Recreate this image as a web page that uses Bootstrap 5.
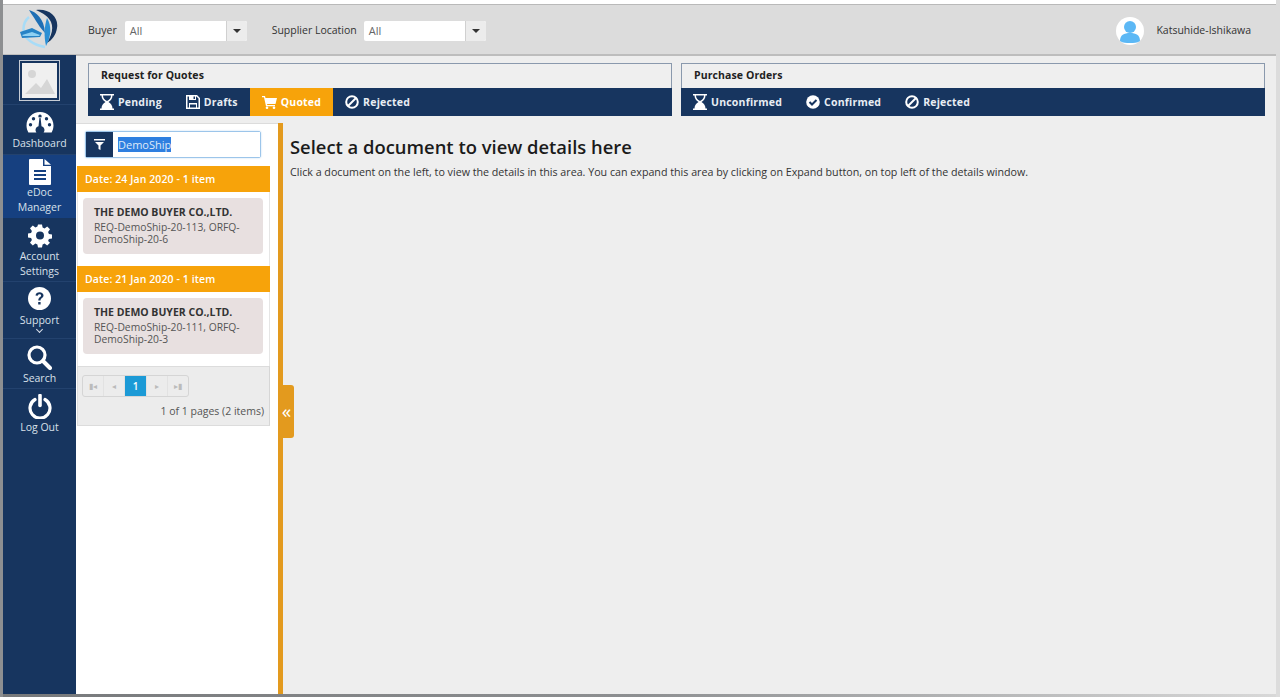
<!doctype html>
<html lang="en">
<head>
<meta charset="utf-8">
<title>eDoc Manager</title>
<link href="https://cdn.jsdelivr.net/npm/bootstrap@5.3.0/dist/css/bootstrap.min.css" rel="stylesheet">
<style>
html,body{height:100%;overflow:hidden}
body{font-family:"Open Sans","Noto Sans",sans-serif;font-size:11px;color:#333;background:#fff}
.frame{height:697px;background:#fff;display:flex;flex-direction:column;border-left:3px solid #8d8f91;padding-top:4px;border-right:4px solid #dcdcdc}
.bottom-edge{height:3px;flex:none;background:linear-gradient(90deg,#77797b,#8d8f91 50%,#d8d8d8)}
.topbar{height:52px;flex:none;background:#dcdcdc;border-top:1px solid #b9b9b9;border-bottom:2px solid #bdbdbd;padding:2px 24px 0 16px}
.brand{width:42px;height:42px;margin:-2px 27px 0 0}
.fl-label{font-size:10.5px;color:#333;margin-right:8px;padding-top:1px}
.fl-label.second{margin-left:1px;margin-right:7px}
.dd{width:122px;height:20px;background:#fff;border-radius:2px;margin-right:24px;overflow:hidden}
.dd-val{flex:1;padding-left:5px;font-size:11px;color:#666;line-height:20px}
.dd-btn{width:21px;background:#ececec;border-left:1px solid #d0d0d0}
.dd-btn i{display:block;border-top:4px solid #333;border-left:4px solid transparent;border-right:4px solid transparent}
.ava{width:28px;height:28px;border-radius:50%;background:#fff;margin-right:12px}
.uname{font-size:10.5px;color:#333;margin-right:1px}
.body-row{flex:1;min-height:0;display:flex;background:#eee}
.side{width:73px;flex:none;background:#17355f;color:#d9e0ea;margin-top:-1px;position:relative}
.side-item{display:flex;flex-direction:column;align-items:center;border-bottom:1px solid #23426e;text-align:center;line-height:14.5px;font-size:10.5px;padding-top:6px}
.side-item svg{display:block;margin-bottom:1px}
.si-photo{height:50px;padding-top:5px}
.si-dash{height:50px}.si-edoc{height:63px;background:#164080;border:none;padding-top:4px}.si-edoc svg{margin-bottom:0}.si-acct{height:64px}.si-supp{height:57px;padding-top:5px}.si-supp span{margin-top:2px}.si-srch{height:50px}.si-out{height:49px;border:none;padding-top:5px}
.photo{width:41px;height:41px;border:1px solid #c6ccd5;padding:2px;background:#17355f}
.photo div{width:100%;height:100%;background:#f0f0f0;display:flex}
.chev{display:block;width:5px;height:5px;border-right:1px solid #d9e0ea;border-bottom:1px solid #d9e0ea;transform:rotate(45deg);margin-top:-1px}
.mainwrap{flex:1;min-width:0;display:flex;flex-direction:column}
.tabs-row{height:67px;flex:none;padding:7px 11px 0 12px;gap:9px;display:flex}
.tpanel{flex:1 1 0;height:53px;border:1px solid #8a99ad;border-bottom:0;background:#efefef}
.tpanel-title{height:24px;padding-left:12px;line-height:22px;font-weight:700;font-size:10.5px;color:#222;letter-spacing:.1px}
.tpanel-tabs{height:28px;background:#17355f;margin-left:-1px;margin-right:-1px}
.tabx{display:flex;align-items:center;color:#e8edf3;font-weight:700;font-size:10.5px;height:28px;letter-spacing:.2px;padding:2px 12px 0;gap:4px;text-decoration:none}
.tabx svg{margin-top:-2px}
.tabx.on{background:#f7a30a;color:#fff}
.work{flex:1;min-height:0;display:flex}
.listpane{width:202px;flex:none;background:#fff;padding-top:7px;padding-left:1px;border-top:1px solid #dcdcdc}
.searchbx{width:176px;height:27px;margin-left:8px;display:flex;border:1px solid #9cc5ea;border-radius:2px;margin-bottom:8px;box-shadow:0 0 2px #bcd9f2}
.funnel{width:27px;background:#17355f;display:flex;align-items:center;justify-content:center}
.searchval{flex:1;padding:0 5px;line-height:25px;font-size:11px;color:#333;background:#fff}
.sel{background:#2f7fe0;color:#dfeaf8}
.grp{width:193px}
.dhead{height:26px;background:#f7a30a;color:#fff;font-weight:600;font-size:10.5px;line-height:27px;padding-left:8px;letter-spacing:.1px}
.dbody{height:74px;padding:6px 6px 6px 5px;border-left:1px solid #e6e6e6;border-right:1px solid #e6e6e6}
.dcard{height:56px;background:#e8e0e0;border-radius:4px;padding:7px 8px 0 11px;font-size:10.3px;line-height:11.5px;color:#555}
.dcard b{display:block;font-weight:700;color:#333;font-size:10.5px;line-height:14px;margin-bottom:3px}
.pagerbar{height:60px;background:#ececec;border:1px solid #dcdcdc;border-right-color:#d6d6d6;padding:8px 5px 0 4px}
.pg{width:107px;height:22px;border:1px solid #d5d5d5;border-radius:3px;display:flex;overflow:hidden}
.pg span{flex:1;display:flex;align-items:center;justify-content:center;color:#bbb;font-size:8px;border-right:1px solid #e2e2e2}
.pg span:last-child{border:none}
.pg .cur{background:#1c9ad6;color:#fff;font-size:10px;font-weight:600}
.pginfo{text-align:right;margin-top:7px;font-size:10.5px;color:#555}
.splitter{width:5px;flex:none;background:#e39a1e;position:relative}
.handle{position:absolute;left:0;top:262px;width:16px;height:53px;background:#e39a1e;border-radius:0 3px 3px 0;color:#fff;font-size:19px;display:flex;align-items:center;justify-content:center;line-height:1;padding-left:1px}
.detail{flex:1;padding:12px 7px}
.detail h1{font-size:18.4px;font-weight:600;color:#1b1b1b;margin:0 0 6px;line-height:24px}
.detail p{font-size:10.7px;color:#333;margin:0;line-height:14px}
</style>
</head>
<body>
<div class="frame">
  <header class="topbar d-flex align-items-center">
    <svg class="brand" viewBox="0 0 42 42" aria-label="logo">
      <path d="M10 8C3 14 2 26 11 32c4 3 9 5 15 6" fill="none" stroke="#a8dcf7" stroke-width="2.500"/>
      <path d="M17 1c13-2 23 7 21 18-1 7-5 12-10 15 4-7 7-14 4-21-2-5-8-9-15-12z" fill="#17355f"/>
      <path d="M10 1c7 2 15 8 16 23-4-4-7-9-9-12-2-4-5-7-7-11z" fill="#1f6fb5"/>
      <path d="M28 9c5 8 4 19-1 28-2-9-2-19 1-28z" fill="#2b8fd4"/>
      <path d="M1 23l12-4 10 5-2 4-18 1z" fill="#2683c6"/>
      <path d="M3 26l10-3 8 3-1 1H4z" fill="#8fd0f2"/>
    </svg>
    <span class="fl-label">Buyer</span>
    <div class="dd d-flex"><span class="dd-val">All</span><span class="dd-btn d-flex align-items-center justify-content-center"><i></i></span></div>
    <span class="fl-label second">Supplier Location</span>
    <div class="dd d-flex"><span class="dd-val">All</span><span class="dd-btn d-flex align-items-center justify-content-center"><i></i></span></div>
    <div class="ms-auto d-flex align-items-center">
      <span class="ava d-flex align-items-center justify-content-center">
        <svg width="22" height="24" viewBox="0 0 22 24"><circle cx="11" cy="8" r="6" fill="#5cb8f5"/><path d="M1 22c0-6 4-8 10-8s10 2 10 8c-3 2-6 2-10 2s-7 0-10-2z" fill="#5cb8f5"/></svg>
      </span>
      <span class="uname">Katsuhide-Ishikawa</span>
    </div>
  </header>
  <div class="body-row">
    <nav class="side">
      <div class="side-item si-photo"><div class="photo"><div><svg width="35" height="35" viewBox="0 0 35 35"><circle cx="10" cy="11" r="4" fill="#d6d6d6"/><path d="M3 31l11-11 5 5 6-9 8 15z" fill="#d6d6d6"/></svg></div></div></div>
      <div class="side-item si-dash">
        <svg width="28" height="24" viewBox="0 0 28 24"><path fill-rule="evenodd" fill="#fff" d="M14 1C6.500 1 .5 7 .5 14.500c0 2.500.7 4.900 1.900 6.900h8c-.6-.7-.9-1.500-.9-2.400 0-1.800 1.300-3.300 3-3.700l1-9h1l1 9c1.700.4 3 1.900 3 3.700 0 .9-.3 1.700-.9 2.400h8c1.200-2 1.900-4.400 1.900-6.900C27.500 7 21.500 1 14 1zM14 3.500a1.700 1.700 0 1 1 0 3.400 1.700 1.700 0 0 1 0-3.400zM7.500 6a1.700 1.700 0 1 1 0 3.400 1.700 1.700 0 0 1 0-3.400zM20.500 6a1.700 1.700 0 1 1 0 3.400 1.700 1.700 0 0 1 0-3.400zM4.500 12a1.700 1.700 0 1 1 0 3.400 1.700 1.700 0 0 1 0-3.400zM23.500 12a1.700 1.700 0 1 1 0 3.400 1.700 1.700 0 0 1 0-3.400z"/></svg>
        <span>Dashboard</span>
      </div>
      <div class="side-item si-edoc">
        <svg width="22" height="26" viewBox="0 0 22 26"><path fill-rule="evenodd" fill="#fff" d="M0 1a1 1 0 0 1 1-1h13v7h8v18a1 1 0 0 1-1 1H1a1 1 0 0 1-1-1zM5 11v2h12v-2zM5 15v2h12v-2zM5 19v2h12v-2z"/><path fill="#fff" d="M15.500 0L22 5.800h-6.500z"/></svg>
        <span>eDoc<br>Manager</span>
      </div>
      <div class="side-item si-acct">
        <svg width="24" height="24" viewBox="0 0 24 24"><path fill-rule="evenodd" fill="#fff" d="M10 1h4l.6 3.100 2 .8L19.200 3 22 5.800l-1.900 2.600.8 2 3.100.6v4l-3.100.6-.8 2L22 19.200 19.200 22l-2.600-1.900-2 .8L14 24h-4l-.6-3.100-2-.8L4.800 22 2 19.200l1.900-2.600-.8-2L0 14v-4l3.100-.6.8-2L2 4.800 4.800 2l2.600 1.900 2-.8zM12 8a4 4 0 1 0 0 8 4 4 0 0 0 0-8z" transform="translate(0 -.5)"/></svg>
        <span>Account<br>Settings</span>
      </div>
      <div class="side-item si-supp">
        <svg width="23" height="23" viewBox="0 0 23 23"><circle cx="11.500" cy="11.500" r="11.500" fill="#fff"/><path d="M7.500 8.500c.3-2.300 2-3.300 4-3.300 2.300 0 4 1.300 4 3.300 0 2.600-3 2.600-3 5h-2.200c0-3.400 2.800-3.400 2.800-5 0-.8-.7-1.300-1.600-1.300-1 0-1.600.5-1.800 1.600z" fill="#17355f"/><rect x="10.200" y="15" width="2.400" height="2.500" fill="#17355f"/></svg>
        <span>Support</span><i class="chev"></i>
      </div>
      <div class="side-item si-srch">
        <svg width="25" height="25" viewBox="0 0 25 25"><circle cx="10" cy="10" r="8" fill="none" stroke="#fff" stroke-width="3.200"/><path d="M16 16l7 7" stroke="#fff" stroke-width="4" stroke-linecap="round"/></svg>
        <span>Search</span>
      </div>
      <div class="side-item si-out">
        <svg width="24" height="25" viewBox="0 0 24 25"><path d="M7 5.500a10 10 0 1 0 10 0" fill="none" stroke="#fff" stroke-width="3.200" stroke-linecap="round"/><path d="M12 1.500v10" stroke="#fff" stroke-width="3.600" stroke-linecap="round"/></svg>
        <span>Log Out</span>
      </div>
    </nav>
    <div class="mainwrap">
      <div class="tabs-row">
        <section class="tpanel">
          <div class="tpanel-title">Request for Quotes</div>
          <div class="tpanel-tabs d-flex">
            <a class="tabx"><svg width="14" height="16" viewBox="0 0 14 16"><path fill="#fff" d="M0 0h14v1.500h-1.500c0 3-1.500 5-4 6.500 2.500 1.500 4 3.500 4 6.500H14V16H0v-1.500h1.500c0-3 1.500-5 4-6.500-2.500-1.500-4-3.500-4-6.500H0zm3 1.500c0 2.500 1.500 4.500 4 5.500 2.500-1 4-3 4-5.500z"/></svg>Pending</a>
            <a class="tabx"><svg width="14" height="14" viewBox="0 0 14 14"><path fill-rule="evenodd" fill="#fff" d="M0 0h11l3 3v11H0zm1.500 1.500v11h1.500V8h8v4.500h1.500V3.600L10.400 1.500H10V5H3V1.500zm2.500 8v3h6v-3zM7.500 1.500V4H9V1.500z"/></svg>Drafts</a>
            <a class="tabx on"><svg width="15" height="13" viewBox="0 0 15 13"><path fill="#fff" d="M0 0h3l.5 2H15l-1.500 6H5l.3 1H13v1.200H4L2 1.300H0z"/><circle cx="5" cy="11.700" r="1.300" fill="#fff"/><circle cx="12" cy="11.700" r="1.300" fill="#fff"/></svg>Quoted</a>
            <a class="tabx"><svg width="14" height="14" viewBox="0 0 14 14"><circle cx="7" cy="7" r="5.800" fill="none" stroke="#fff" stroke-width="2"/><path d="M3 11L11 3" stroke="#fff" stroke-width="2"/></svg>Rejected</a>
          </div>
        </section>
        <section class="tpanel">
          <div class="tpanel-title">Purchase Orders</div>
          <div class="tpanel-tabs d-flex">
            <a class="tabx"><svg width="14" height="16" viewBox="0 0 14 16"><path fill="#fff" d="M0 0h14v1.500h-1.500c0 3-1.500 5-4 6.500 2.500 1.500 4 3.500 4 6.500H14V16H0v-1.500h1.500c0-3 1.500-5 4-6.500-2.500-1.500-4-3.500-4-6.500H0zm3 1.500c0 2.500 1.500 4.500 4 5.500 2.500-1 4-3 4-5.500z"/></svg>Unconfirmed</a>
            <a class="tabx"><svg width="14" height="14" viewBox="0 0 14 14"><circle cx="7" cy="7" r="6.800" fill="#fff"/><path d="M3.500 7l2.500 2.500 4.500-4.500" fill="none" stroke="#17355f" stroke-width="2"/></svg>Confirmed</a>
            <a class="tabx"><svg width="14" height="14" viewBox="0 0 14 14"><circle cx="7" cy="7" r="5.800" fill="none" stroke="#fff" stroke-width="2"/><path d="M3 11L11 3" stroke="#fff" stroke-width="2"/></svg>Rejected</a>
          </div>
        </section>
      </div>
      <div class="work">
        <aside class="listpane">
          <div class="searchbx">
            <span class="funnel"><svg width="11" height="11" viewBox="0 0 11 11"><path fill="#fff" d="M0 0h11v1.500H0zM1 3h9L6.500 6.500V11l-2-1V6.500z"/></svg></span>
            <span class="searchval"><span class="sel">DemoShip</span></span>
          </div>
          <div class="grp">
            <div class="dhead">Date: 24 Jan 2020 - 1 item</div>
            <div class="dbody"><div class="dcard"><b>THE DEMO BUYER CO.,LTD.</b>REQ-DemoShip-20-113, ORFQ-DemoShip-20-6</div></div>
            <div class="dhead">Date: 21 Jan 2020 - 1 item</div>
            <div class="dbody"><div class="dcard"><b>THE DEMO BUYER CO.,LTD.</b>REQ-DemoShip-20-111, ORFQ-DemoShip-20-3</div></div>
            <div class="pagerbar">
              <div class="pg"><span>&#9646;&#9666;</span><span>&#9666;</span><span class="cur">1</span><span>&#9656;</span><span>&#9656;&#9646;</span></div>
              <div class="pginfo">1 of 1 pages (2 items)</div>
            </div>
          </div>
        </aside>
        <div class="splitter"><div class="handle">&laquo;</div></div>
        <main class="detail">
          <h1>Select a document to view details here</h1>
          <p>Click a document on the left, to view the details in this area. You can expand this area by clicking on Expand button, on top left of the details window.</p>
        </main>
      </div>
    </div>
  </div>
  <div class="bottom-edge"></div>
</div>
<script src="https://cdn.jsdelivr.net/npm/bootstrap@5.3.0/dist/js/bootstrap.bundle.min.js"></script>
</body>
</html>
